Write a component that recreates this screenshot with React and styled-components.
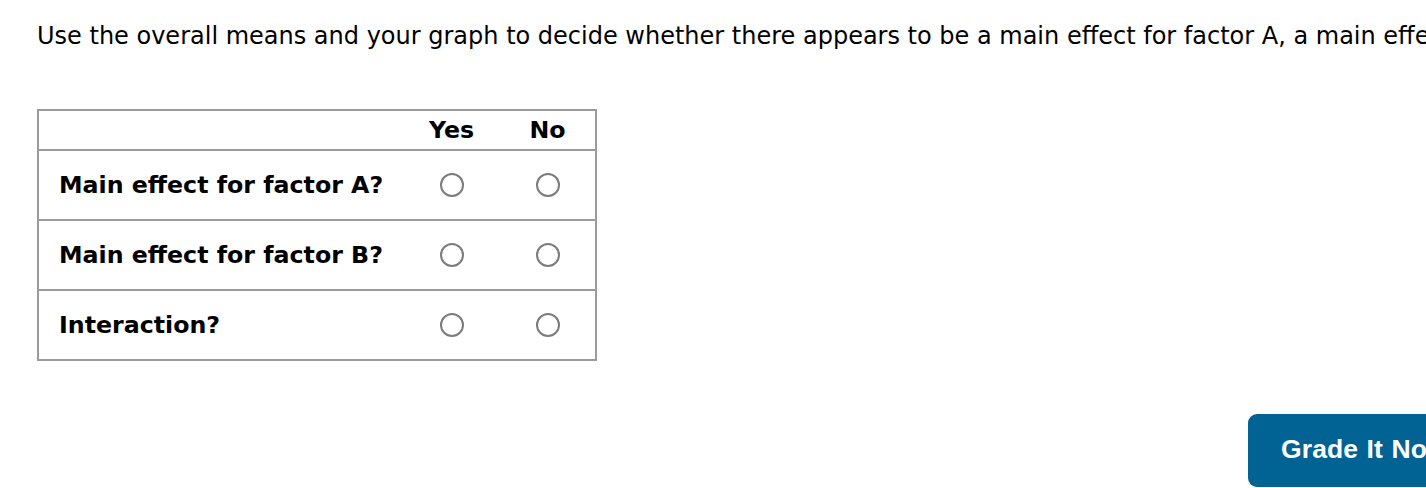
import React from 'react';
import styled, { createGlobalStyle } from 'styled-components';

const GlobalStyle = createGlobalStyle`
  html, body {
    margin: 0;
    padding: 0;
    background: #fff;
    overflow: hidden;
  }
`;

const Page = styled.div`
  width: 1800px;
  height: 488px;
  padding: 22px 0 0 37px;
  box-sizing: border-box;
  font-family: 'DejaVu Sans', Verdana, sans-serif;
  color: #000;
`;

const Prompt = styled.p`
  margin: 0;
  font-size: 24px;
  line-height: 28px;
  white-space: nowrap;
`;

const Table = styled.div`
  margin-top: 59px;
  width: 560px;
  border: 2px solid #9b9b9b;
  box-sizing: border-box;
`;

const Row = styled.div`
  display: grid;
  grid-template-columns: 364px 97px 95px;
  align-items: center;
  height: ${p => (p.$head ? 38 : 70)}px;
  border-top: ${p => (p.$head ? 'none' : '2px solid #9b9b9b')};
  box-sizing: border-box;
`;

const Label = styled.div`
  padding-left: 20px;
  font-size: 23.7px;
  font-weight: bold;
  white-space: nowrap;
`;

const Head = styled.div`
  text-align: center;
  font-size: 23.7px;
  font-weight: bold;
`;

const Cell = styled.div`
  display: flex;
  justify-content: center;
`;

const Radio = styled.span`
  display: block;
  width: 24px;
  height: 24px;
  border: 2px solid #7b7b7b;
  border-radius: 50%;
  box-sizing: border-box;
`;

const Footer = styled.div`
  display: flex;
  padding-left: 1211px;
  margin-top: 53px;
`;

const GradeButton = styled.button`
  display: flex;
  align-items: center;
  width: 220px;
  height: 73px;
  padding: 0 0 2px 33px;
  border: none;
  border-radius: 9px;
  background: #016394;
  color: #fff;
  font-family: 'Liberation Sans', Arial, sans-serif;
  font-size: 26.5px;
  font-weight: bold;
  letter-spacing: 0.1px;
  word-spacing: 1px;
  white-space: nowrap;
`;

const questions = ['Main effect for factor A?', 'Main effect for factor B?', 'Interaction?'];

export default function App() {
  return (
    <Page>
      <GlobalStyle />
      <Prompt>
        Use the overall means and your graph to decide whether there appears to be a main effect for factor A, a main effect for factor B, and/or an interaction.
      </Prompt>
      <Table>
        <Row $head>
          <div />
          <Head>Yes</Head>
          <Head>No</Head>
        </Row>
        {questions.map(q => (
          <Row key={q}>
            <Label>{q}</Label>
            <Cell><Radio /></Cell>
            <Cell><Radio /></Cell>
          </Row>
        ))}
      </Table>
      <Footer>
        <GradeButton>Grade It Now</GradeButton>
      </Footer>
    </Page>
  );
}
